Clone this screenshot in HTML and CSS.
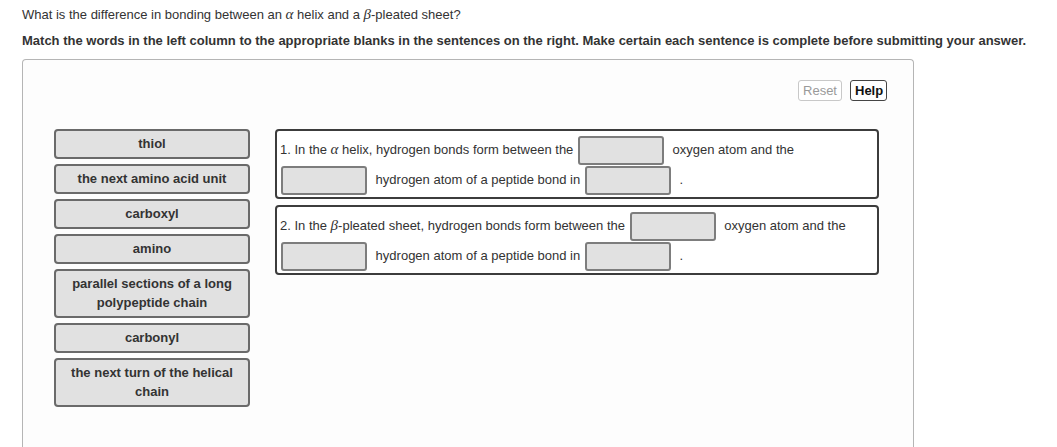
FILE: index.html
```html
<!DOCTYPE html>
<html lang="en">
<head>
    <meta charset="UTF-8">
    <meta name="viewport" content="width=device-width, initial-scale=1.0">
    <title>Alpha Helix vs Beta Sheet</title>
    <link rel="stylesheet" href="styles.css">
</head>
<body>
    <p class="question">What is the difference in bonding between an <span class="math">&alpha;</span> helix and a <span class="math">&beta;</span>-pleated sheet?</p>
    <p class="instructions">Match the words in the left column to the appropriate blanks in the sentences on the right. Make certain each sentence is complete before submitting your answer.</p>

    <div class="panel">
        <div class="toolbar">
            <button class="tool-btn reset" disabled>Reset</button>
            <button class="tool-btn help">Help</button>
        </div>

        <div class="workspace">
            <!-- Draggable word bank -->
            <div class="word-bank">
                <div class="word">thiol</div>
                <div class="word">the next amino acid unit</div>
                <div class="word">carboxyl</div>
                <div class="word">amino</div>
                <div class="word">parallel sections of a long polypeptide chain</div>
                <div class="word">carbonyl</div>
                <div class="word">the next turn of the helical chain</div>
            </div>

            <!-- Sentences with drop targets -->
            <div class="sentences">
                <div class="sentence">
                    1. In the <span class="math">&alpha;</span> helix, hydrogen bonds form between the <span class="blank"></span> oxygen atom and the <span class="blank"></span> hydrogen atom of a peptide bond in <span class="blank"></span> .
                </div>
                <div class="sentence">
                    2. In the <span class="math">&beta;</span>-pleated sheet, hydrogen bonds form between the <span class="blank"></span> oxygen atom and the <span class="blank"></span> hydrogen atom of a peptide bond in <span class="blank"></span> .
                </div>
            </div>
        </div>
    </div>
</body>
</html>
```

FILE: styles.css
```css
body {
    margin: 0;
    padding: 0 22px;
    font-family: "Liberation Sans", Arial, sans-serif;
    font-size: 13px;
    color: #333;
    background: #fff;
}

.question {
    margin: 0;
    padding-top: 6px;
    line-height: 16px;
}

.instructions {
    margin: 10px 0 0;
    line-height: 16px;
    font-weight: bold;
}

.math {
    font-family: "Liberation Serif", "Times New Roman", serif;
    font-style: italic;
    font-size: 15px;
}

/* Main answer area */
.panel {
    margin-top: 10px;
    width: 890px;
    min-height: 420px;
    border: 1px solid #b5b5b5;
    border-bottom: none;
    border-radius: 4px 4px 0 0;
    background: #fdfdfd;
}

.toolbar {
    display: flex;
    justify-content: flex-end;
    gap: 8px;
    padding: 20px 26px 0 0;
}

.tool-btn {
    height: 21px;
    padding: 0 4px;
    font-family: "Liberation Sans", Arial, sans-serif;
    font-size: 13px;
    background: #fff;
    border-radius: 3px;
}

.reset {
    width: 44px;
    color: #9a9a9a;
    border: 1px solid #c8c8c8;
}

.help {
    width: 37px;
    color: #111;
    font-weight: bold;
    border: 1px solid #444;
}

.workspace {
    display: flex;
    align-items: flex-start;
    gap: 25px;
    margin-top: 28px;
    padding-left: 31px;
}

.word-bank {
    display: flex;
    flex-direction: column;
    gap: 5px;
    width: 196px;
}

.word {
    box-sizing: border-box;
    padding: 3px 12px 4px;
    line-height: 19px;
    text-align: center;
    font-weight: bold;
    color: #333;
    background: #e1e1e1;
    border: 2px solid #6a6a6a;
    border-radius: 4px;
}

.sentences {
    display: flex;
    flex-direction: column;
    gap: 6px;
    width: 604px;
}

.sentence {
    padding: 3px 4px 2px 3px;
    line-height: 30px;
    color: #333;
    border: 2px solid #3c3c3c;
    border-radius: 4px;
    background: #fff;
}

.blank {
    display: inline-block;
    box-sizing: border-box;
    width: 86px;
    height: 29px;
    margin: 0 5px 0 1px;
    vertical-align: middle;
    background: #e1e1e1;
    border: 2px solid #7d7d7d;
    border-radius: 3px;
}
```
